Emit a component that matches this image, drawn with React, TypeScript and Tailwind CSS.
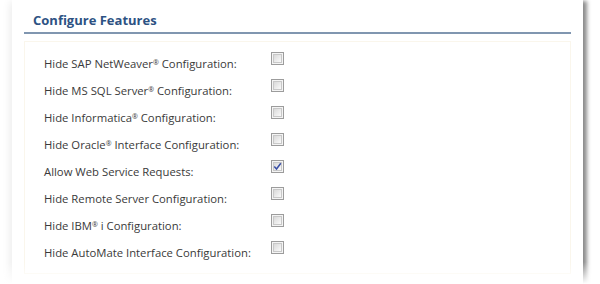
import React from "react";

const features = [
  { name: "Hide SAP NetWeaver", reg: true, rest: " Configuration:", checked: false },
  { name: "Hide MS SQL Server", reg: true, rest: " Configuration:", checked: false },
  { name: "Hide Informatica", reg: true, rest: " Configuration:", checked: false },
  { name: "Hide Oracle", reg: true, rest: " Interface Configuration:", checked: false },
  { name: "Allow Web Service Requests:", reg: false, rest: "", checked: true },
  { name: "Hide Remote Server Configuration:", reg: false, rest: "", checked: false },
  { name: "Hide IBM", reg: true, rest: " i Configuration:", checked: false },
  { name: "Hide AutoMate Interface Configuration:", reg: false, rest: "", checked: false },
];

const Checkbox = ({ checked }: { checked: boolean }) => (
  <span className="flex h-[13px] w-[13px] items-center justify-center border border-[#9c9c9c] bg-[#f4f4f4]">
    <span className="flex h-[9px] w-[9px] items-center justify-center border border-[#c8c8c8] bg-gradient-to-br from-[#d9d9d9] to-[#fafafa]">
      {checked && (
        <svg width="9" height="9" viewBox="0 0 9 9" className="shrink-0">
          <path d="M1.3 4.6 L3.5 7 L7.8 1.2" fill="none" stroke="#3a4fa6" strokeWidth="1.5" />
        </svg>
      )}
    </span>
  </span>
);

export default function App() {
  return (
    <div className="relative h-[284px] w-[600px] overflow-hidden bg-white font-['Open_Sans',sans-serif]">
      <div className="ml-[12px] h-[300px] w-[571px] bg-white shadow-[5px_0_4px_-1px_rgba(0,0,0,0.45),-4px_0_8px_-2px_rgba(0,0,0,0.08)]">
        <div className="px-[12px]">
          <div className="border-b-2 border-[#8096b0] pl-[9px] pt-[11px] pb-[3px]">
            <h2 className="text-[13px] font-bold leading-[18px] text-[#2d5283]">Configure Features</h2>
          </div>
          <div className="mt-[7px] h-[233px] border border-[#faf6ec] pl-[19px] pt-[10px]">
            {features.map((f) => (
              <div key={f.name} className="flex h-[27px] items-start">
                <span className="mt-[4px] w-[227px] text-[11.3px] leading-[15px] text-[#3a3a3a]">
                  {f.name}
                  {f.reg && <span className="relative -top-[3px] text-[7px]">®</span>}
                  {f.rest}
                </span>
                <Checkbox checked={f.checked} />
              </div>
            ))}
          </div>
        </div>
      </div>
      <div className="pointer-events-none absolute bottom-0 left-0 h-[22px] w-full bg-gradient-to-b from-white/0 to-white" />
    </div>
  );
}
